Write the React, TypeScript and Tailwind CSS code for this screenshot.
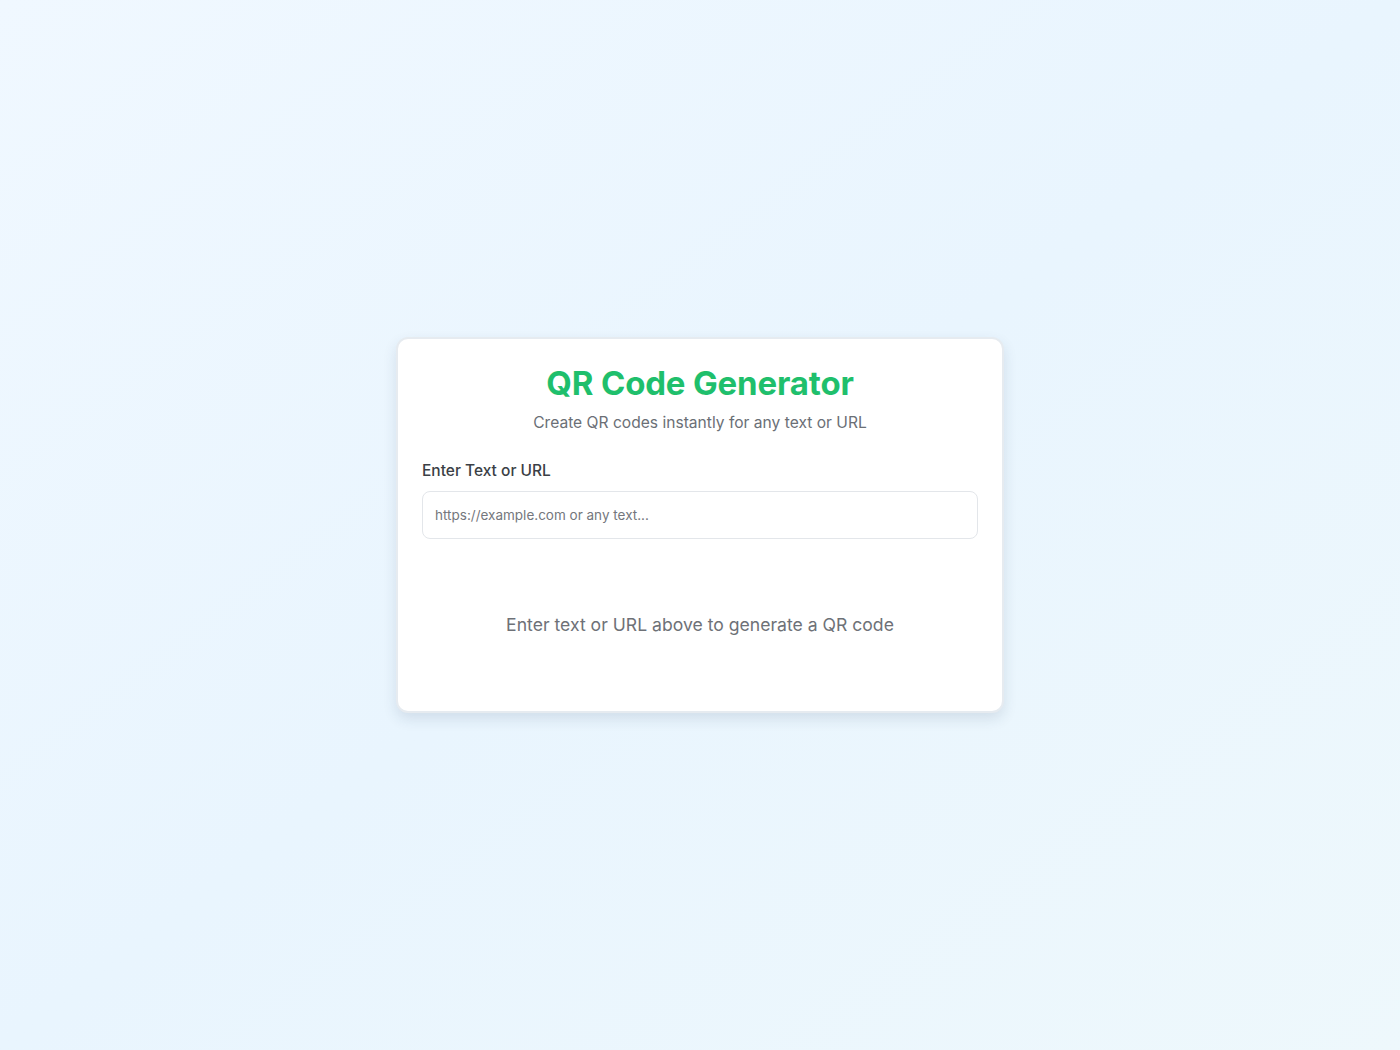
import React, { useState } from "react";

export default function App() {
  const [text, setText] = useState("");
  return (
    <div
      className="min-h-screen w-full flex items-center justify-center bg-gradient-to-br from-[#f0f8ff] via-[#e9f5fe] to-[#eef8fc]"
      style={{ fontFamily: "Inter, 'Noto Sans', sans-serif" }}
    >
      <div className="w-[608px] bg-white rounded-xl border-2 border-[#e6ebf0] shadow-[0_6px_14px_rgba(30,60,90,0.12)] p-6">
        <h1 className="text-center text-[33px] leading-[40px] font-bold tracking-[-0.005em] text-[#1fbf6c]">
          QR Code Generator
        </h1>
        <p className="mt-2 text-center text-[15.6px] leading-6 text-[#6b6f76]">
          Create QR codes instantly for any text or URL
        </p>
        <label className="block mt-6 text-[15.5px] leading-6 font-medium text-[#3b3f46]">
          Enter Text or URL
        </label>
        <input
          value={text}
          onChange={(e) => setText(e.target.value)}
          placeholder="https://example.com or any text..."
          className="mt-2 block w-full h-12 px-3 rounded-lg border border-[#e3e6ea] text-[13.5px] text-[#333] placeholder:text-[#74777d] outline-none"
          style={{ fontFamily: "Inter, 'Noto Sans', sans-serif" }}
        />
        <div className="mt-6 py-12 text-center text-[17.6px] leading-7 text-[#6e7177]">
          Enter text or URL above to generate a QR code
        </div>
      </div>
    </div>
  );
}
